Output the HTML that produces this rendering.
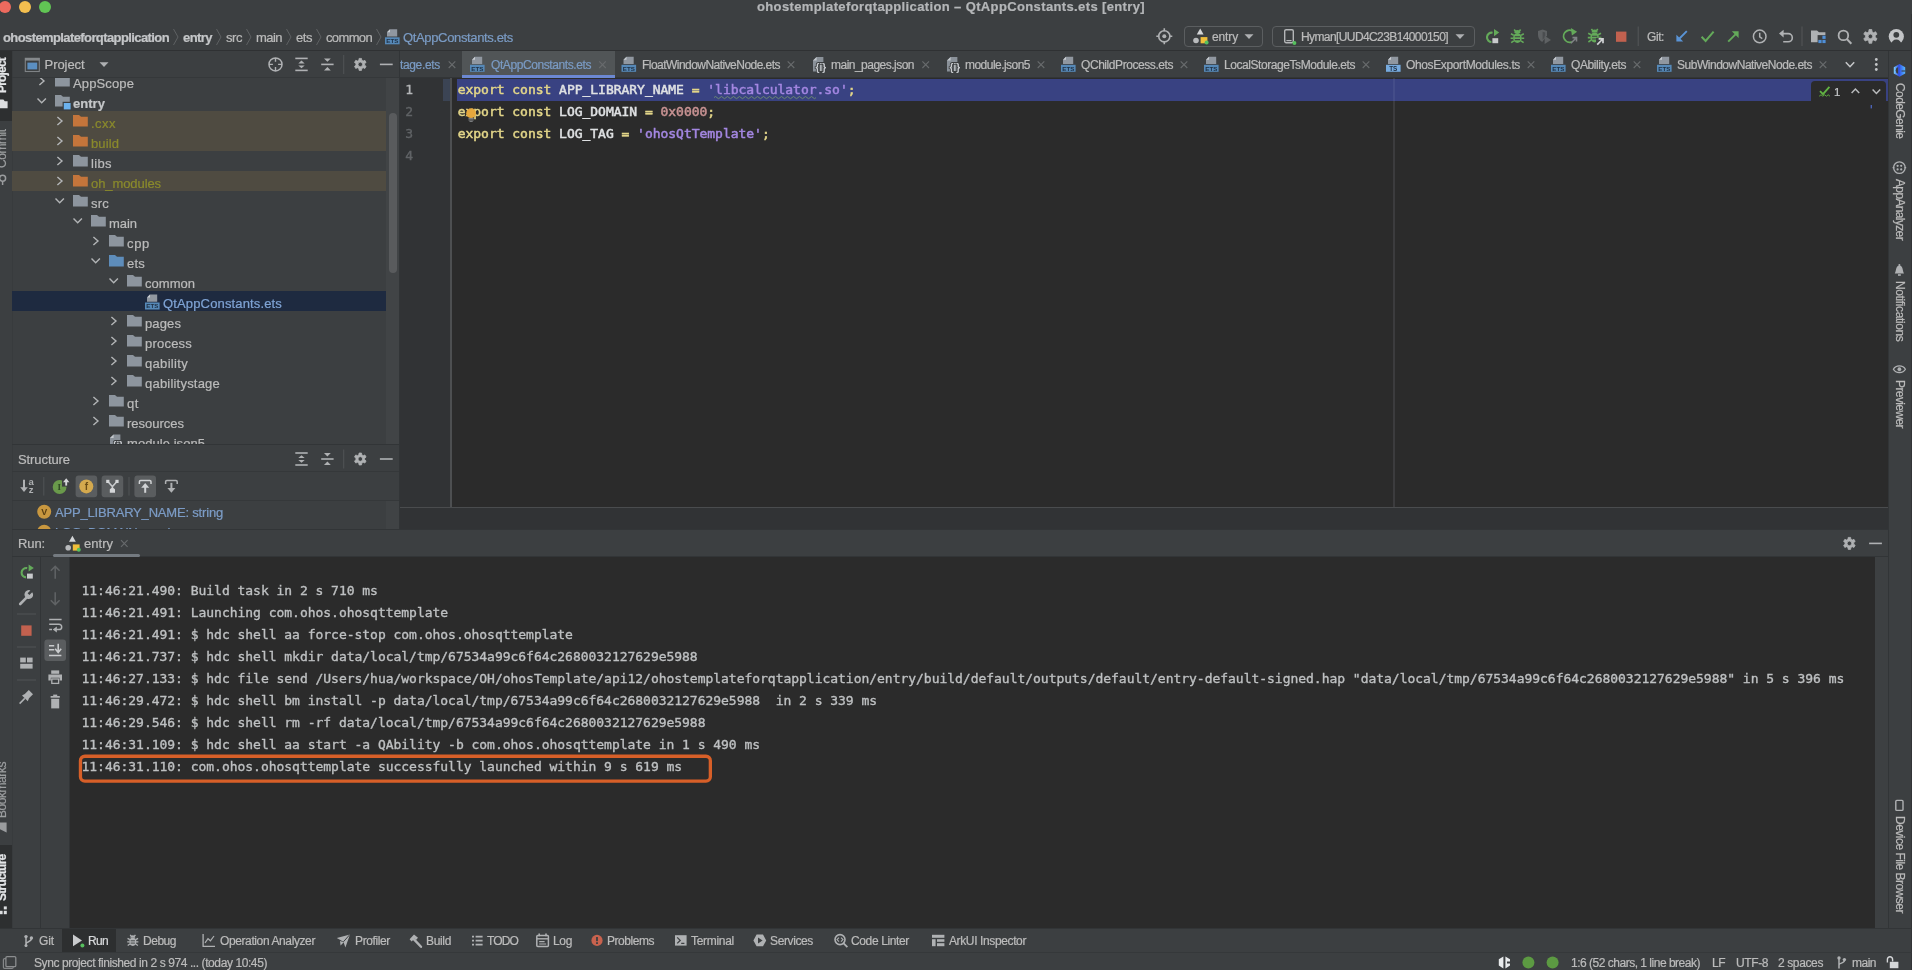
<!DOCTYPE html>
<html lang="en"><head><meta charset="utf-8"><title>ohostemplateforqtapplication – QtAppConstants.ets [entry]</title>
<style>
html,body{margin:0;padding:0;background:#3c3f41;}
body{width:1912px;height:970px;overflow:hidden;position:relative;font-family:"Liberation Sans", sans-serif;font-size:13px;-webkit-font-smoothing:antialiased;}
#r{position:absolute;left:0;top:0;width:1912px;height:970px;overflow:hidden;will-change:transform;}
#r div,#r span,#r svg,#r pre{position:absolute;}
#r span{white-space:pre;-webkit-text-stroke:0.22px;}
#r .m{font-family:"DejaVu Sans Mono", "Liberation Mono", monospace;letter-spacing:-0.027px;-webkit-text-stroke:0.35px;}
#r pre{margin:0;font-family:"DejaVu Sans Mono", "Liberation Mono", monospace;font-size:13px;line-height:22px;white-space:pre;}
#r .c div,#r .c span,#r .c svg{position:absolute;}
</style></head>
<body><div id="r">
<div style="left:0px;top:0px;width:1912px;height:970px;background:#3c3f41;"></div>
<div style="left:0px;top:50px;width:1912px;height:1px;background:#2f3133;"></div>
<div style="left:0px;top:51px;width:12px;height:878px;background:#3c3f41;"></div>
<div style="left:11.5px;top:51px;width:1px;height:878px;background:#383b3d;"></div>
<div style="left:0px;top:51px;width:12px;height:70px;background:#2d2f30;"></div>
<div style="left:0px;top:845px;width:12px;height:84px;background:#2d2f30;"></div>
<div style="left:12px;top:77px;width:388px;height:1px;background:#35383a;"></div>
<div style="left:12px;top:111px;width:374px;height:40px;background:#4f4b41;"></div>
<div style="left:12px;top:171px;width:374px;height:20px;background:#4f4b41;"></div>
<div style="left:12px;top:291px;width:374px;height:20px;background:#1e2a40;"></div>
<div style="left:386px;top:78px;width:13px;height:366px;background:#414446;"></div>
<div style="left:389px;top:113px;width:8px;height:160px;background:#595b5d;border-radius:4px;"></div>
<div style="left:12px;top:444px;width:388px;height:1px;background:#323537;"></div>
<div style="left:12px;top:471px;width:388px;height:1px;background:#35383a;"></div>
<div style="left:12px;top:500px;width:388px;height:1px;background:#35383a;"></div>
<div style="left:386px;top:501px;width:13px;height:28px;background:#404345;"></div>
<div style="left:399px;top:51px;width:1px;height:479px;background:#323537;"></div>
<div style="left:400px;top:78px;width:1488px;height:430px;background:#2b2b2b;"></div>
<div style="left:400px;top:78px;width:51px;height:430px;background:#313335;"></div>
<div style="left:450.4px;top:78px;width:1.8px;height:430px;background:#4d4f51;"></div>
<div style="left:1393px;top:78px;width:1.5px;height:430px;background:#3c3c3e;"></div>
<div style="left:457px;top:78.5px;width:1431px;height:22px;background:#394282;"></div>
<div style="left:1393px;top:78.5px;width:1.5px;height:22px;background:rgba(255,255,255,0.06);"></div>
<div style="left:442.6px;top:78.5px;width:7.8px;height:22px;background:#3b4454;"></div>
<div style="left:400px;top:507px;width:1488px;height:1px;background:#4a4c4e;"></div>
<div style="left:400px;top:508px;width:1488px;height:22px;background:#313335;"></div>
<div style="left:400px;top:77px;width:1488px;height:1px;background:#323537;"></div>
<div style="left:462px;top:51px;width:152.5px;height:26px;background:#515557;"></div>
<div style="left:462px;top:75.2px;width:152.5px;height:2.9px;background:#6c88d2;"></div>
<div style="left:12px;top:529px;width:1876px;height:1px;background:#323537;"></div>
<div style="left:12px;top:556px;width:1876px;height:1px;background:#323537;"></div>
<div style="left:70px;top:557px;width:1805px;height:372px;background:#2b2b2b;"></div>
<div style="left:1874.5px;top:557px;width:14px;height:372px;background:#3d4042;"></div>
<div style="left:40px;top:557px;width:1px;height:372px;background:#323537;"></div>
<div style="left:69px;top:557px;width:1px;height:372px;background:#323537;"></div>
<div style="left:53px;top:554px;width:87px;height:3px;background:#747a80;border-radius:1.5px;"></div>
<div style="left:1888px;top:51px;width:1px;height:878px;background:#323537;"></div>
<div style="left:1910.5px;top:14px;width:1.5px;height:956px;background:#323436;"></div>
<div style="left:0px;top:928px;width:1912px;height:1px;background:#323537;"></div>
<div style="left:62px;top:929px;width:54px;height:23px;background:#2d2f30;"></div>
<div style="left:0px;top:952px;width:1912px;height:1px;background:#35383a;"></div>
<div style="left:-1px;top:1px;width:12px;height:12px;background:#ec6a5e;border-radius:6px;"></div>
<div style="left:19px;top:1px;width:12px;height:12px;background:#f4bf4f;border-radius:6px;"></div>
<div style="left:39px;top:1px;width:12px;height:12px;background:#61c554;border-radius:6px;"></div>
<span style="left:757px;top:-1.0px;color:#b4b6b8;font-size:13px;line-height:16px;font-weight:700;letter-spacing:0.370px;">ohostemplateforqtapplication – QtAppConstants.ets [entry]</span>
<span style="left:3px;top:30.0px;color:#c4c6c8;font-size:13px;line-height:16px;font-weight:700;letter-spacing:-0.598px;">ohostemplateforqtapplication</span>
<span style="left:183px;top:30.0px;color:#c4c6c8;font-size:13px;line-height:16px;font-weight:700;letter-spacing:-0.559px;">entry</span>
<span style="left:226px;top:30.0px;color:#bbbbbb;font-size:13px;line-height:16px;letter-spacing:-0.448px;">src</span>
<span style="left:256px;top:30.0px;color:#bbbbbb;font-size:13px;line-height:16px;letter-spacing:-0.547px;">main</span>
<span style="left:296px;top:30.0px;color:#bbbbbb;font-size:13px;line-height:16px;letter-spacing:-0.448px;">ets</span>
<span style="left:326px;top:30.0px;color:#bbbbbb;font-size:13px;line-height:16px;letter-spacing:-0.643px;">common</span>
<span style="left:403px;top:30.0px;color:#7a9bc4;font-size:13px;line-height:16px;letter-spacing:-0.352px;">QtAppConstants.ets</span>
<svg style="left:172px;top:28px;" width="8" height="18" viewBox="0 0 8 18"><path d="M1.5 1 L6 9 L1.5 17" fill="none" stroke="#5e6163" stroke-width="1"/></svg>
<svg style="left:215px;top:28px;" width="8" height="18" viewBox="0 0 8 18"><path d="M1.5 1 L6 9 L1.5 17" fill="none" stroke="#5e6163" stroke-width="1"/></svg>
<svg style="left:245px;top:28px;" width="8" height="18" viewBox="0 0 8 18"><path d="M1.5 1 L6 9 L1.5 17" fill="none" stroke="#5e6163" stroke-width="1"/></svg>
<svg style="left:285px;top:28px;" width="8" height="18" viewBox="0 0 8 18"><path d="M1.5 1 L6 9 L1.5 17" fill="none" stroke="#5e6163" stroke-width="1"/></svg>
<svg style="left:315px;top:28px;" width="8" height="18" viewBox="0 0 8 18"><path d="M1.5 1 L6 9 L1.5 17" fill="none" stroke="#5e6163" stroke-width="1"/></svg>
<svg style="left:375px;top:28px;" width="8" height="18" viewBox="0 0 8 18"><path d="M1.5 1 L6 9 L1.5 17" fill="none" stroke="#5e6163" stroke-width="1"/></svg>
<div style="left:1183.5px;top:25.7px;width:79.5px;height:21.5px;border:1px solid #5b5e60;border-radius:4px;box-sizing:border-box;"></div>
<div style="left:1272.3px;top:25.7px;width:202.4px;height:21.5px;border:1px solid #5b5e60;border-radius:4px;box-sizing:border-box;"></div>
<span style="left:1212px;top:29.0px;color:#bbbbbb;font-size:12px;line-height:16px;letter-spacing:-0.138px;">entry</span>
<span style="left:1301px;top:29.0px;color:#bbbbbb;font-size:12px;line-height:16px;letter-spacing:-0.599px;">Hyman[UUD4C23B14000150]</span>
<span style="left:1647px;top:29.0px;color:#bbbbbb;font-size:12px;line-height:16px;letter-spacing:-0.418px;">Git:</span>
<span style="left:44.6px;top:57.0px;color:#bbbbbb;font-size:13px;line-height:16px;letter-spacing:-0.067px;">Project</span>
<span style="left:18px;top:451.5px;color:#bbbbbb;font-size:13px;line-height:16px;letter-spacing:-0.083px;">Structure</span>
<span style="left:18px;top:536.4px;color:#bbbbbb;font-size:13px;line-height:16px;letter-spacing:-0.117px;">Run:</span>
<span style="left:84px;top:536.4px;color:#bbbbbb;font-size:13px;line-height:16px;letter-spacing:0.019px;">entry</span>
<span style="left:399.9px;top:57.0px;color:#7a9bc4;font-size:12px;line-height:16px;letter-spacing:-0.325px;">tage.ets</span>
<span style="left:491px;top:57.0px;color:#7a9bc4;font-size:12px;line-height:16px;letter-spacing:-0.411px;">QtAppConstants.ets</span>
<span style="left:642px;top:57.0px;color:#bbbbbb;font-size:12px;line-height:16px;letter-spacing:-0.536px;">FloatWindowNativeNode.ets</span>
<span style="left:831px;top:57.0px;color:#bbbbbb;font-size:12px;line-height:16px;letter-spacing:-0.516px;">main_pages.json</span>
<span style="left:965px;top:57.0px;color:#bbbbbb;font-size:12px;line-height:16px;letter-spacing:-0.533px;">module.json5</span>
<span style="left:1081px;top:57.0px;color:#bbbbbb;font-size:12px;line-height:16px;letter-spacing:-0.434px;">QChildProcess.ets</span>
<span style="left:1224px;top:57.0px;color:#bbbbbb;font-size:12px;line-height:16px;letter-spacing:-0.434px;">LocalStorageTsModule.ets</span>
<span style="left:1406px;top:57.0px;color:#bbbbbb;font-size:12px;line-height:16px;letter-spacing:-0.370px;">OhosExportModules.ts</span>
<span style="left:1571px;top:57.0px;color:#bbbbbb;font-size:12px;line-height:16px;letter-spacing:-0.400px;">QAbility.ets</span>
<span style="left:1677px;top:57.0px;color:#bbbbbb;font-size:12px;line-height:16px;letter-spacing:-0.482px;">SubWindowNativeNode.ets</span>
<div class="c" style="left:12px;top:78px;width:374px;height:366px;overflow:hidden;">
<span style="left:61px;top:-2.5px;color:#bbbbbb;font-size:13px;line-height:16px;letter-spacing:0.125px;">AppScope</span>
<span style="left:61px;top:17.5px;color:#c4c6c8;font-size:13px;line-height:16px;font-weight:700;letter-spacing:0.041px;">entry</span>
<span style="left:79px;top:37.5px;color:#8a8a2c;font-size:13px;line-height:16px;letter-spacing:0.469px;">.cxx</span>
<span style="left:79px;top:57.5px;color:#8a8a2c;font-size:13px;line-height:16px;letter-spacing:0.106px;">build</span>
<span style="left:79px;top:77.5px;color:#bbbbbb;font-size:13px;line-height:16px;letter-spacing:0.371px;">libs</span>
<span style="left:79px;top:97.5px;color:#8a8a2c;font-size:13px;line-height:16px;letter-spacing:-0.083px;">oh_modules</span>
<span style="left:79px;top:117.5px;color:#bbbbbb;font-size:13px;line-height:16px;letter-spacing:0.219px;">src</span>
<span style="left:97px;top:137.5px;color:#bbbbbb;font-size:13px;line-height:16px;letter-spacing:-0.047px;">main</span>
<span style="left:115px;top:157.5px;color:#bbbbbb;font-size:13px;line-height:16px;letter-spacing:0.677px;">cpp</span>
<span style="left:115px;top:177.5px;color:#bbbbbb;font-size:13px;line-height:16px;letter-spacing:0.219px;">ets</span>
<span style="left:133px;top:197.5px;color:#bbbbbb;font-size:13px;line-height:16px;letter-spacing:0.023px;">common</span>
<span style="left:151px;top:217.5px;color:#7fa3d4;font-size:13px;line-height:16px;letter-spacing:0.148px;">QtAppConstants.ets</span>
<span style="left:133px;top:237.5px;color:#bbbbbb;font-size:13px;line-height:16px;letter-spacing:0.116px;">pages</span>
<span style="left:133px;top:257.5px;color:#bbbbbb;font-size:13px;line-height:16px;letter-spacing:0.210px;">process</span>
<span style="left:133px;top:277.5px;color:#bbbbbb;font-size:13px;line-height:16px;letter-spacing:0.316px;">qability</span>
<span style="left:133px;top:297.5px;color:#bbbbbb;font-size:13px;line-height:16px;letter-spacing:0.209px;">qabilitystage</span>
<span style="left:115px;top:317.5px;color:#bbbbbb;font-size:13px;line-height:16px;letter-spacing:0.578px;">qt</span>
<span style="left:115px;top:337.5px;color:#bbbbbb;font-size:13px;line-height:16px;letter-spacing:-0.009px;">resources</span>
<span style="left:115px;top:357.5px;color:#bbbbbb;font-size:13px;line-height:16px;letter-spacing:0.056px;">module.json5</span>
</div>
<div class="c" style="left:12px;top:501px;width:374px;height:28px;overflow:hidden;">
<span style="left:43px;top:4.2999999999999545px;color:#7c9cc6;font-size:13px;line-height:16px;letter-spacing:-0.186px;">APP_LIBRARY_NAME: string</span>
<span style="left:43px;top:24.299999999999955px;color:#7c9cc6;font-size:13px;line-height:16px;letter-spacing:-0.444px;">LOG_DOMAIN: number</span>
</div>
<span class="m" style="left:457.7px;top:78.5px;color:#e3d689;font-size:13px;line-height:22px;-webkit-text-stroke:0.5px;">export const </span>
<span class="m" style="left:559.1px;top:78.5px;color:#dfe1e3;font-size:13px;line-height:22px;-webkit-text-stroke:0.5px;">APP_LIBRARY_NAME </span>
<span class="m" style="left:691.7px;top:78.5px;color:#e3d689;font-size:13px;line-height:22px;-webkit-text-stroke:0.5px;">= </span>
<span class="m" style="left:707.3px;top:78.5px;color:#a487e2;font-size:13px;line-height:22px;-webkit-text-stroke:0.5px;">'libcalculator.so'</span>
<span class="m" style="left:847.7px;top:78.5px;color:#e3d689;font-size:13px;line-height:22px;-webkit-text-stroke:0.5px;">;</span>
<span class="m" style="left:457.7px;top:100.5px;color:#e3d689;font-size:13px;line-height:22px;-webkit-text-stroke:0.5px;">export const </span>
<span class="m" style="left:559.1px;top:100.5px;color:#dfe1e3;font-size:13px;line-height:22px;-webkit-text-stroke:0.5px;">LOG_DOMAIN </span>
<span class="m" style="left:644.9px;top:100.5px;color:#e3d689;font-size:13px;line-height:22px;-webkit-text-stroke:0.5px;">= </span>
<span class="m" style="left:660.5px;top:100.5px;color:#c99393;font-size:13px;line-height:22px;-webkit-text-stroke:0.5px;">0x0000</span>
<span class="m" style="left:707.3px;top:100.5px;color:#e3d689;font-size:13px;line-height:22px;-webkit-text-stroke:0.5px;">;</span>
<span class="m" style="left:457.7px;top:122.5px;color:#e3d689;font-size:13px;line-height:22px;-webkit-text-stroke:0.5px;">export const </span>
<span class="m" style="left:559.1px;top:122.5px;color:#dfe1e3;font-size:13px;line-height:22px;-webkit-text-stroke:0.5px;">LOG_TAG </span>
<span class="m" style="left:621.5px;top:122.5px;color:#e3d689;font-size:13px;line-height:22px;-webkit-text-stroke:0.5px;">= </span>
<span class="m" style="left:637.1px;top:122.5px;color:#a487e2;font-size:13px;line-height:22px;-webkit-text-stroke:0.5px;">'ohosQtTemplate'</span>
<span class="m" style="left:761.9px;top:122.5px;color:#e3d689;font-size:13px;line-height:22px;-webkit-text-stroke:0.5px;">;</span>
<span class="m" style="left:405.2px;top:79.1px;color:#b4b6b8;font-size:13px;line-height:22px;">1</span>
<span class="m" style="left:405.2px;top:101.1px;color:#606366;font-size:13px;line-height:22px;">2</span>
<span class="m" style="left:405.2px;top:123.1px;color:#606366;font-size:13px;line-height:22px;">3</span>
<span class="m" style="left:405.2px;top:145.1px;color:#606366;font-size:13px;line-height:22px;">4</span>
<div style="left:1810.7px;top:80.7px;width:75.5px;height:21px;background:#2b2b2b;border-radius:4px 4px 0 0;"></div>
<span style="left:1834px;top:84.0px;color:#c4c6c8;font-size:11.5px;line-height:16px;">1</span>
<span class="m" style="left:81.5px;top:580.0px;color:#bec0c2;font-size:13px;line-height:22px;">11:46:21.490: Build task in 2 s 710 ms</span>
<span class="m" style="left:81.5px;top:602.0px;color:#bec0c2;font-size:13px;line-height:22px;">11:46:21.491: Launching com.ohos.ohosqttemplate</span>
<span class="m" style="left:81.5px;top:624.0px;color:#bec0c2;font-size:13px;line-height:22px;">11:46:21.491: $ hdc shell aa force-stop com.ohos.ohosqttemplate</span>
<span class="m" style="left:81.5px;top:646.0px;color:#bec0c2;font-size:13px;line-height:22px;">11:46:21.737: $ hdc shell mkdir data/local/tmp/67534a99c6f64c2680032127629e5988</span>
<span class="m" style="left:81.5px;top:668.0px;color:#bec0c2;font-size:13px;line-height:22px;">11:46:27.133: $ hdc file send /Users/hua/workspace/OH/ohosTemplate/api12/ohostemplateforqtapplication/entry/build/default/outputs/default/entry-default-signed.hap "data/local/tmp/67534a99c6f64c2680032127629e5988" in 5 s 396 ms</span>
<span class="m" style="left:81.5px;top:690.0px;color:#bec0c2;font-size:13px;line-height:22px;">11:46:29.472: $ hdc shell bm install -p data/local/tmp/67534a99c6f64c2680032127629e5988  in 2 s 339 ms</span>
<span class="m" style="left:81.5px;top:712.0px;color:#bec0c2;font-size:13px;line-height:22px;">11:46:29.546: $ hdc shell rm -rf data/local/tmp/67534a99c6f64c2680032127629e5988</span>
<span class="m" style="left:81.5px;top:734.0px;color:#bec0c2;font-size:13px;line-height:22px;">11:46:31.109: $ hdc shell aa start -a QAbility -b com.ohos.ohosqttemplate in 1 s 490 ms</span>
<span class="m" style="left:81.5px;top:756.0px;color:#bec0c2;font-size:13px;line-height:22px;">11:46:31.110: com.ohos.ohosqttemplate successfully launched within 9 s 619 ms</span>
<span style="left:39px;top:932.8px;color:#bbbbbb;font-size:12px;line-height:16px;letter-spacing:-0.115px;">Git</span>
<span style="left:88px;top:932.8px;color:#d6d8da;font-size:12px;line-height:16px;letter-spacing:-0.672px;">Run</span>
<span style="left:143px;top:932.8px;color:#bbbbbb;font-size:12px;line-height:16px;letter-spacing:-0.475px;">Debug</span>
<span style="left:220px;top:932.8px;color:#bbbbbb;font-size:12px;line-height:16px;letter-spacing:-0.392px;">Operation Analyzer</span>
<span style="left:355px;top:932.8px;color:#bbbbbb;font-size:12px;line-height:16px;letter-spacing:-0.377px;">Profiler</span>
<span style="left:426px;top:932.8px;color:#bbbbbb;font-size:12px;line-height:16px;letter-spacing:-0.338px;">Build</span>
<span style="left:487px;top:932.8px;color:#bbbbbb;font-size:12px;line-height:16px;letter-spacing:-0.863px;">TODO</span>
<span style="left:553px;top:932.8px;color:#bbbbbb;font-size:12px;line-height:16px;letter-spacing:-0.344px;">Log</span>
<span style="left:607px;top:932.8px;color:#bbbbbb;font-size:12px;line-height:16px;letter-spacing:-0.461px;">Problems</span>
<span style="left:691px;top:932.8px;color:#bbbbbb;font-size:12px;line-height:16px;letter-spacing:-0.295px;">Terminal</span>
<span style="left:770px;top:932.8px;color:#bbbbbb;font-size:12px;line-height:16px;letter-spacing:-0.377px;">Services</span>
<span style="left:851px;top:932.8px;color:#bbbbbb;font-size:12px;line-height:16px;letter-spacing:-0.368px;">Code Linter</span>
<span style="left:949px;top:932.8px;color:#bbbbbb;font-size:12px;line-height:16px;letter-spacing:-0.380px;">ArkUI Inspector</span>
<span style="left:34px;top:954.8px;color:#bbbbbb;font-size:12px;line-height:16px;letter-spacing:-0.410px;">Sync project finished in 2 s 974 ... (today 10:45)</span>
<span style="left:1571px;top:954.8px;color:#bbbbbb;font-size:12px;line-height:16px;letter-spacing:-0.491px;">1:6 (52 chars, 1 line break)</span>
<span style="left:1712px;top:954.8px;color:#bbbbbb;font-size:12px;line-height:16px;letter-spacing:-0.508px;">LF</span>
<span style="left:1736px;top:954.8px;color:#bbbbbb;font-size:12px;line-height:16px;letter-spacing:-0.400px;">UTF-8</span>
<span style="left:1778px;top:954.8px;color:#bbbbbb;font-size:12px;line-height:16px;letter-spacing:-0.379px;">2 spaces</span>
<span style="left:1852px;top:954.8px;color:#bbbbbb;font-size:12px;line-height:16px;letter-spacing:-0.504px;">main</span>
<svg style="left:12px;top:78px;" width="374" height="366" viewBox="0 0 374 366"><g transform="translate(29.7 3)"><path d="M-2.3 -4.1 L2.3 0 L-2.3 4.1" fill="none" stroke="#b2b4b6" stroke-width="1.4"/></g><g transform="translate(43 -7)"><path d="M0 4 h6 l2 1.8 h6.8 v9.8 h-14.8 z" fill="#8d959e"/></g><g transform="translate(29.7 22.6)"><path d="M-4.2 -2.2 L0 2.2 L4.2 -2.2" fill="none" stroke="#b2b4b6" stroke-width="1.4"/></g><g transform="translate(43 13)"><path d="M0 4 h6 l2 1.8 h6.8 v9.8 h-14.8 z" fill="#8d959e"/></g><g transform="translate(43 13)"><rect x="7.6" y="10.8" width="8.4" height="8.4" fill="#3c3f41"/><rect x="8.8" y="12" width="6.8" height="6.4" fill="#6cb2ee"/></g><g transform="translate(47.7 43)"><path d="M-2.3 -4.1 L2.3 0 L-2.3 4.1" fill="none" stroke="#b2b4b6" stroke-width="1.4"/></g><g transform="translate(61 33)"><path d="M0 4 h6 l2 1.8 h6.8 v9.8 h-14.8 z" fill="#c4753b"/></g><g transform="translate(47.7 63)"><path d="M-2.3 -4.1 L2.3 0 L-2.3 4.1" fill="none" stroke="#b2b4b6" stroke-width="1.4"/></g><g transform="translate(61 53)"><path d="M0 4 h6 l2 1.8 h6.8 v9.8 h-14.8 z" fill="#c4753b"/></g><g transform="translate(47.7 83)"><path d="M-2.3 -4.1 L2.3 0 L-2.3 4.1" fill="none" stroke="#b2b4b6" stroke-width="1.4"/></g><g transform="translate(61 73)"><path d="M0 4 h6 l2 1.8 h6.8 v9.8 h-14.8 z" fill="#8d959e"/></g><g transform="translate(47.7 103)"><path d="M-2.3 -4.1 L2.3 0 L-2.3 4.1" fill="none" stroke="#b2b4b6" stroke-width="1.4"/></g><g transform="translate(61 93)"><path d="M0 4 h6 l2 1.8 h6.8 v9.8 h-14.8 z" fill="#c4753b"/></g><g transform="translate(47.7 122.6)"><path d="M-4.2 -2.2 L0 2.2 L4.2 -2.2" fill="none" stroke="#b2b4b6" stroke-width="1.4"/></g><g transform="translate(61 113)"><path d="M0 4 h6 l2 1.8 h6.8 v9.8 h-14.8 z" fill="#8d959e"/></g><g transform="translate(65.7 142.6)"><path d="M-4.2 -2.2 L0 2.2 L4.2 -2.2" fill="none" stroke="#b2b4b6" stroke-width="1.4"/></g><g transform="translate(79 133)"><path d="M0 4 h6 l2 1.8 h6.8 v9.8 h-14.8 z" fill="#8d959e"/></g><g transform="translate(83.7 163)"><path d="M-2.3 -4.1 L2.3 0 L-2.3 4.1" fill="none" stroke="#b2b4b6" stroke-width="1.4"/></g><g transform="translate(97 153)"><path d="M0 4 h6 l2 1.8 h6.8 v9.8 h-14.8 z" fill="#8d959e"/></g><g transform="translate(83.7 182.6)"><path d="M-4.2 -2.2 L0 2.2 L4.2 -2.2" fill="none" stroke="#b2b4b6" stroke-width="1.4"/></g><g transform="translate(97 173)"><path d="M0 4 h6 l2 1.8 h6.8 v9.8 h-14.8 z" fill="#5e8dbb"/></g><g transform="translate(101.7 202.6)"><path d="M-4.2 -2.2 L0 2.2 L4.2 -2.2" fill="none" stroke="#b2b4b6" stroke-width="1.4"/></g><g transform="translate(115 193)"><path d="M0 4 h6 l2 1.8 h6.8 v9.8 h-14.8 z" fill="#8d959e"/></g><g transform="translate(133 216.2)"><path d="M5 0.3 h7.2 v7.2 h-10.2 v-4.2 z" fill="#9097a0"/><path d="M2 3.3 l3 -3 v3 z" fill="#c9cdd2"/><rect x="0" y="8.3" width="14.6" height="7" fill="#5689b8"/><text x="7.3" y="14.1" font-size="6.2" font-weight="700" text-anchor="middle" fill="#203246" font-family="Liberation Sans, sans-serif">ETS</text></g><g transform="translate(101.7 243)"><path d="M-2.3 -4.1 L2.3 0 L-2.3 4.1" fill="none" stroke="#b2b4b6" stroke-width="1.4"/></g><g transform="translate(115 233)"><path d="M0 4 h6 l2 1.8 h6.8 v9.8 h-14.8 z" fill="#8d959e"/></g><g transform="translate(101.7 263)"><path d="M-2.3 -4.1 L2.3 0 L-2.3 4.1" fill="none" stroke="#b2b4b6" stroke-width="1.4"/></g><g transform="translate(115 253)"><path d="M0 4 h6 l2 1.8 h6.8 v9.8 h-14.8 z" fill="#8d959e"/></g><g transform="translate(101.7 283)"><path d="M-2.3 -4.1 L2.3 0 L-2.3 4.1" fill="none" stroke="#b2b4b6" stroke-width="1.4"/></g><g transform="translate(115 273)"><path d="M0 4 h6 l2 1.8 h6.8 v9.8 h-14.8 z" fill="#8d959e"/></g><g transform="translate(101.7 303)"><path d="M-2.3 -4.1 L2.3 0 L-2.3 4.1" fill="none" stroke="#b2b4b6" stroke-width="1.4"/></g><g transform="translate(115 293)"><path d="M0 4 h6 l2 1.8 h6.8 v9.8 h-14.8 z" fill="#8d959e"/></g><g transform="translate(83.7 323)"><path d="M-2.3 -4.1 L2.3 0 L-2.3 4.1" fill="none" stroke="#b2b4b6" stroke-width="1.4"/></g><g transform="translate(97 313)"><path d="M0 4 h6 l2 1.8 h6.8 v9.8 h-14.8 z" fill="#8d959e"/></g><g transform="translate(83.7 343)"><path d="M-2.3 -4.1 L2.3 0 L-2.3 4.1" fill="none" stroke="#b2b4b6" stroke-width="1.4"/></g><g transform="translate(97 333)"><path d="M0 4 h6 l2 1.8 h6.8 v9.8 h-14.8 z" fill="#8d959e"/></g><g transform="translate(98 356.5)"><path d="M3.6 0 h6.8 v14.4 h-10.4 v-10.8 z" fill="#8a9199"/><path d="M0 3.6 l3.6 -3.6 v3.6 z" fill="#c3c8cd"/><text x="7.8" y="14" font-size="10" font-weight="700" text-anchor="middle" fill="#c9ccd0" stroke="#3c3f41" stroke-width="1.8" paint-order="stroke" font-family="Liberation Sans, sans-serif">{i}</text></g></svg>
<span style="left:-6.4px;top:92.5px;color:#e4e6e8;font-size:12px;line-height:16px;font-weight:700;letter-spacing:-0.812px;transform-origin:0 0;transform:rotate(-90deg);">Project</span>
<span style="left:-6.4px;top:168.0px;color:#9c9ea0;font-size:12px;line-height:16px;letter-spacing:-0.474px;transform-origin:0 0;transform:rotate(-90deg);">Commit</span>
<span style="left:-6.2px;top:817.5px;color:#9c9ea0;font-size:12px;line-height:16px;letter-spacing:-0.448px;transform-origin:0 0;transform:rotate(-90deg);">Bookmarks</span>
<span style="left:-6.2px;top:901.0px;color:#e4e6e8;font-size:12px;line-height:16px;font-weight:700;letter-spacing:-0.760px;transform-origin:0 0;transform:rotate(-90deg);">Structure</span>
<span style="left:1908.2px;top:82.6px;color:#bbbbbb;font-size:12px;line-height:16px;letter-spacing:-0.591px;transform-origin:0 0;transform:rotate(90deg);">CodeGenie</span>
<span style="left:1908.2px;top:178.6px;color:#bbbbbb;font-size:12px;line-height:16px;letter-spacing:-0.641px;transform-origin:0 0;transform:rotate(90deg);">AppAnalyzer</span>
<span style="left:1908.2px;top:280.6px;color:#bbbbbb;font-size:12px;line-height:16px;letter-spacing:-0.383px;transform-origin:0 0;transform:rotate(90deg);">Notifications</span>
<span style="left:1908.2px;top:379.6px;color:#bbbbbb;font-size:12px;line-height:16px;letter-spacing:-0.595px;transform-origin:0 0;transform:rotate(90deg);">Previewer</span>
<span style="left:1908.2px;top:816.0px;color:#bbbbbb;font-size:12px;line-height:16px;letter-spacing:-0.511px;transform-origin:0 0;transform:rotate(90deg);">Device File Browser</span>
<svg style="left:0px;top:0px;pointer-events:none;" width="1912" height="970" viewBox="0 0 1912 970"><g transform="translate(25 58)"><rect x="0.3" y="0.3" width="14" height="13.2" fill="none" stroke="#7f8386" stroke-width="1.1"/><rect x="0" y="0" width="14.6" height="2.6" fill="#85898c"/><rect x="2.4" y="4.6" width="9.8" height="6.8" fill="#5b8fc2"/></g><path d="M99.5 62.3 h9 l-4.5 4.6 z" fill="#aeb0b2"/><g transform="translate(275.5 64.4)"><circle r="6.5" fill="none" stroke="#afb1b3" stroke-width="1.5"/><path d="M0 -6.5 V-2.6 M0 6.5 V2.6 M-6.5 0 H-2.6 M6.5 0 H2.6" stroke="#afb1b3" stroke-width="1.4"/></g><g transform="translate(301.5 64.4)"><rect x="-6.2" y="-6.8" width="12.4" height="1.6" fill="#afb1b3"/><rect x="-6.2" y="5.2" width="12.4" height="1.6" fill="#afb1b3"/><path d="M-3.2 -1 L0 -3.8 L3.2 -1 Z M-3.2 1 L0 3.8 L3.2 1 Z" fill="#afb1b3"/></g><g transform="translate(327.4 64.4)"><rect x="-6.2" y="-0.8" width="12.4" height="1.6" fill="#afb1b3"/><path d="M-3.4 -6 L0 -2.6 L3.4 -6 Z M-3.4 6 L0 2.6 L3.4 6 Z" fill="#afb1b3"/></g><rect x="343.2" y="55" width="1" height="19" fill="#515456"/><g transform="translate(360.3 64.4)"><path d="M-1.47 -4.15 L-1.21 -5.98 L1.21 -5.98 L1.47 -4.15 L2.86 -3.34 L4.57 -4.04 L5.78 -1.94 L4.33 -0.80 L4.33 0.80 L5.78 1.94 L4.57 4.04 L2.86 3.34 L1.47 4.15 L1.21 5.98 L-1.21 5.98 L-1.47 4.15 L-2.86 3.34 L-4.57 4.04 L-5.78 1.94 L-4.33 0.80 L-4.33 -0.80 L-5.78 -1.94 L-4.57 -4.04 L-2.86 -3.34 Z M2.3 0 A2.3 2.3 0 1 0 -2.3 0 A2.3 2.3 0 1 0 2.3 0 Z" fill="#afb1b3" fill-rule="evenodd" stroke="#afb1b3" stroke-width="0.8" stroke-linejoin="round"/></g><g transform="translate(386.3 64.4)"><rect x="-6.4" y="-0.8" width="12.8" height="1.6" fill="#afb1b3"/></g><g transform="translate(301.5 459)"><rect x="-6.2" y="-6.8" width="12.4" height="1.6" fill="#afb1b3"/><rect x="-6.2" y="5.2" width="12.4" height="1.6" fill="#afb1b3"/><path d="M-3.2 -1 L0 -3.8 L3.2 -1 Z M-3.2 1 L0 3.8 L3.2 1 Z" fill="#afb1b3"/></g><g transform="translate(327.4 459)"><rect x="-6.2" y="-0.8" width="12.4" height="1.6" fill="#afb1b3"/><path d="M-3.4 -6 L0 -2.6 L3.4 -6 Z M-3.4 6 L0 2.6 L3.4 6 Z" fill="#afb1b3"/></g><rect x="343.2" y="449.5" width="1" height="19.0" fill="#515456"/><g transform="translate(360.3 459)"><path d="M-1.47 -4.15 L-1.21 -5.98 L1.21 -5.98 L1.47 -4.15 L2.86 -3.34 L4.57 -4.04 L5.78 -1.94 L4.33 -0.80 L4.33 0.80 L5.78 1.94 L4.57 4.04 L2.86 3.34 L1.47 4.15 L1.21 5.98 L-1.21 5.98 L-1.47 4.15 L-2.86 3.34 L-4.57 4.04 L-5.78 1.94 L-4.33 0.80 L-4.33 -0.80 L-5.78 -1.94 L-4.57 -4.04 L-2.86 -3.34 Z M2.3 0 A2.3 2.3 0 1 0 -2.3 0 A2.3 2.3 0 1 0 2.3 0 Z" fill="#afb1b3" fill-rule="evenodd" stroke="#afb1b3" stroke-width="0.8" stroke-linejoin="round"/></g><g transform="translate(386.3 459)"><rect x="-6.4" y="-0.8" width="12.8" height="1.6" fill="#afb1b3"/></g><g transform="translate(1849.4 543.4)"><path d="M-1.47 -4.15 L-1.21 -5.98 L1.21 -5.98 L1.47 -4.15 L2.86 -3.34 L4.57 -4.04 L5.78 -1.94 L4.33 -0.80 L4.33 0.80 L5.78 1.94 L4.57 4.04 L2.86 3.34 L1.47 4.15 L1.21 5.98 L-1.21 5.98 L-1.47 4.15 L-2.86 3.34 L-4.57 4.04 L-5.78 1.94 L-4.33 0.80 L-4.33 -0.80 L-5.78 -1.94 L-4.57 -4.04 L-2.86 -3.34 Z M2.3 0 A2.3 2.3 0 1 0 -2.3 0 A2.3 2.3 0 1 0 2.3 0 Z" fill="#afb1b3" fill-rule="evenodd" stroke="#afb1b3" stroke-width="0.8" stroke-linejoin="round"/></g><g transform="translate(1875.5 543.4)"><rect x="-6.4" y="-0.8" width="12.8" height="1.6" fill="#afb1b3"/></g><g transform="translate(385 29)"><path d="M5 0.3 h7.2 v7.2 h-10.2 v-4.2 z" fill="#9097a0"/><path d="M2 3.3 l3 -3 v3 z" fill="#c9cdd2"/><rect x="0" y="8.3" width="14.6" height="7" fill="#5689b8"/><text x="7.3" y="14.1" font-size="6.2" font-weight="700" text-anchor="middle" fill="#203246" font-family="Liberation Sans, sans-serif">ETS</text></g><g transform="translate(470 56.5)"><path d="M5 0.3 h7.2 v7.2 h-10.2 v-4.2 z" fill="#9097a0"/><path d="M2 3.3 l3 -3 v3 z" fill="#c9cdd2"/><rect x="0" y="8.3" width="14.6" height="7" fill="#5689b8"/><text x="7.3" y="14.1" font-size="6.2" font-weight="700" text-anchor="middle" fill="#203246" font-family="Liberation Sans, sans-serif">ETS</text></g><g transform="translate(621.5 56.5)"><path d="M5 0.3 h7.2 v7.2 h-10.2 v-4.2 z" fill="#9097a0"/><path d="M2 3.3 l3 -3 v3 z" fill="#c9cdd2"/><rect x="0" y="8.3" width="14.6" height="7" fill="#5689b8"/><text x="7.3" y="14.1" font-size="6.2" font-weight="700" text-anchor="middle" fill="#203246" font-family="Liberation Sans, sans-serif">ETS</text></g><g transform="translate(813 57)"><path d="M3.6 0 h6.8 v14.4 h-10.4 v-10.8 z" fill="#8a9199"/><path d="M0 3.6 l3.6 -3.6 v3.6 z" fill="#c3c8cd"/><text x="7.8" y="14" font-size="10" font-weight="700" text-anchor="middle" fill="#c9ccd0" stroke="#3c3f41" stroke-width="1.8" paint-order="stroke" font-family="Liberation Sans, sans-serif">{i}</text></g><g transform="translate(947 57)"><path d="M3.6 0 h6.8 v14.4 h-10.4 v-10.8 z" fill="#8a9199"/><path d="M0 3.6 l3.6 -3.6 v3.6 z" fill="#c3c8cd"/><text x="7.8" y="14" font-size="10" font-weight="700" text-anchor="middle" fill="#c9ccd0" stroke="#3c3f41" stroke-width="1.8" paint-order="stroke" font-family="Liberation Sans, sans-serif">{i}</text></g><g transform="translate(1061 56.5)"><path d="M5 0.3 h7.2 v7.2 h-10.2 v-4.2 z" fill="#9097a0"/><path d="M2 3.3 l3 -3 v3 z" fill="#c9cdd2"/><rect x="0" y="8.3" width="14.6" height="7" fill="#5689b8"/><text x="7.3" y="14.1" font-size="6.2" font-weight="700" text-anchor="middle" fill="#203246" font-family="Liberation Sans, sans-serif">ETS</text></g><g transform="translate(1204 56.5)"><path d="M5 0.3 h7.2 v7.2 h-10.2 v-4.2 z" fill="#9097a0"/><path d="M2 3.3 l3 -3 v3 z" fill="#c9cdd2"/><rect x="0" y="8.3" width="14.6" height="7" fill="#5689b8"/><text x="7.3" y="14.1" font-size="6.2" font-weight="700" text-anchor="middle" fill="#203246" font-family="Liberation Sans, sans-serif">ETS</text></g><g transform="translate(1386 56.5)"><path d="M5 0.3 h7.2 v7.2 h-10.2 v-4.2 z" fill="#9097a0"/><path d="M2 3.3 l3 -3 v3 z" fill="#c9cdd2"/><rect x="0" y="8.3" width="14.6" height="7" fill="#76aade"/><text x="7.3" y="14.1" font-size="6.4" font-weight="700" text-anchor="middle" fill="#203246" font-family="Liberation Sans, sans-serif">TS</text></g><g transform="translate(1551 56.5)"><path d="M5 0.3 h7.2 v7.2 h-10.2 v-4.2 z" fill="#9097a0"/><path d="M2 3.3 l3 -3 v3 z" fill="#c9cdd2"/><rect x="0" y="8.3" width="14.6" height="7" fill="#5689b8"/><text x="7.3" y="14.1" font-size="6.2" font-weight="700" text-anchor="middle" fill="#203246" font-family="Liberation Sans, sans-serif">ETS</text></g><g transform="translate(1657 56.5)"><path d="M5 0.3 h7.2 v7.2 h-10.2 v-4.2 z" fill="#9097a0"/><path d="M2 3.3 l3 -3 v3 z" fill="#c9cdd2"/><rect x="0" y="8.3" width="14.6" height="7" fill="#5689b8"/><text x="7.3" y="14.1" font-size="6.2" font-weight="700" text-anchor="middle" fill="#203246" font-family="Liberation Sans, sans-serif">ETS</text></g><g transform="translate(452 64.7)"><path d="M-3.3 -3.3 L3.3 3.3 M3.3 -3.3 L-3.3 3.3" stroke="#686b6d" stroke-width="1.1" fill="none"/></g><g transform="translate(602.5 64.7)"><path d="M-3.3 -3.3 L3.3 3.3 M3.3 -3.3 L-3.3 3.3" stroke="#686b6d" stroke-width="1.1" fill="none"/></g><g transform="translate(791 64.7)"><path d="M-3.3 -3.3 L3.3 3.3 M3.3 -3.3 L-3.3 3.3" stroke="#686b6d" stroke-width="1.1" fill="none"/></g><g transform="translate(925.7 64.7)"><path d="M-3.3 -3.3 L3.3 3.3 M3.3 -3.3 L-3.3 3.3" stroke="#686b6d" stroke-width="1.1" fill="none"/></g><g transform="translate(1041 64.7)"><path d="M-3.3 -3.3 L3.3 3.3 M3.3 -3.3 L-3.3 3.3" stroke="#686b6d" stroke-width="1.1" fill="none"/></g><g transform="translate(1184 64.7)"><path d="M-3.3 -3.3 L3.3 3.3 M3.3 -3.3 L-3.3 3.3" stroke="#686b6d" stroke-width="1.1" fill="none"/></g><g transform="translate(1366 64.7)"><path d="M-3.3 -3.3 L3.3 3.3 M3.3 -3.3 L-3.3 3.3" stroke="#686b6d" stroke-width="1.1" fill="none"/></g><g transform="translate(1531 64.7)"><path d="M-3.3 -3.3 L3.3 3.3 M3.3 -3.3 L-3.3 3.3" stroke="#686b6d" stroke-width="1.1" fill="none"/></g><g transform="translate(1637 64.7)"><path d="M-3.3 -3.3 L3.3 3.3 M3.3 -3.3 L-3.3 3.3" stroke="#686b6d" stroke-width="1.1" fill="none"/></g><g transform="translate(1823 64.7)"><path d="M-3.3 -3.3 L3.3 3.3 M3.3 -3.3 L-3.3 3.3" stroke="#686b6d" stroke-width="1.1" fill="none"/></g><g transform="translate(124.3 543.5)"><path d="M-3.3 -3.3 L3.3 3.3 M3.3 -3.3 L-3.3 3.3" stroke="#686b6d" stroke-width="1.1" fill="none"/></g><g transform="translate(1850 64.5)"><path d="M-4.2 -2.2 L0 2.2 L4.2 -2.2" fill="none" stroke="#c4c6c8" stroke-width="1.6"/></g><g transform="translate(1876.3 64.5)"><circle cy="-5" r="1.4" fill="#c4c6c8"/><circle r="1.4" fill="#c4c6c8"/><circle cy="5" r="1.4" fill="#c4c6c8"/></g><g transform="translate(1164.3 36.3)"><circle r="5.6" fill="none" stroke="#afb1b3" stroke-width="1.6"/><circle r="2" fill="#afb1b3"/><path d="M0 -8 V-5 M0 8 V5 M-8 0 H-5 M8 0 H5" stroke="#afb1b3" stroke-width="1.6"/></g><g transform="translate(1193 28.5)"><path d="M7.2 0 L10.6 6 H3.8 Z" fill="#d4d6d8"/><circle cx="3" cy="12" r="2.8" fill="#b9bbbd"/><rect x="7.6" y="8.6" width="6.8" height="6.2" fill="#f0bf3a"/><circle cx="13.6" cy="14" r="2" fill="#57c05f"/></g><path d="M1244.5 34.2 h9 l-4.5 4.8 z" fill="#aeb0b2"/><g transform="translate(1284 29)"><rect x="0.7" y="0.7" width="8.6" height="13" rx="1.4" fill="none" stroke="#b4b6b8" stroke-width="1.4"/><rect x="2.4" y="11" width="5.2" height="1.2" fill="#b4b6b8"/><circle cx="10.4" cy="14" r="2" fill="#57c05f"/></g><path d="M1455.5 34.2 h9 l-4.5 4.8 z" fill="#aeb0b2"/><g transform="translate(1491.6 37)"><path d="M0.4 5 A4.7 4.7 0 1 1 1 -4.3" fill="none" stroke="#64aa5a" stroke-width="2.1"/><path d="M2.4 -8 L7.6 -4.4 L2.4 -0.8 Z" fill="#64aa5a"/><rect x="-0.2" y="0.2" width="7.8" height="7" fill="#3c3f41"/><rect x="0.8" y="1.2" width="5.8" height="5" fill="#c8cacc"/></g><g transform="translate(1517.4 36.8)"><g transform="scale(1.0)"><ellipse cx="0" cy="1.2" rx="4.3" ry="5" fill="#64aa5a"/><path d="M-3 -3.8 A3 3 0 0 1 3 -3.8 Z" fill="#64aa5a"/><path d="M-3.6 -1.4 L-6.4 -3 M-4 1.4 H-6.8 M-3.6 4 L-6.2 5.8 M3.6 -1.4 L6.4 -3 M4 1.4 H6.8 M3.6 4 L6.2 5.8 M-1.8 -5.4 L-3.2 -7.2 M1.8 -5.4 L3.2 -7.2" stroke="#64aa5a" stroke-width="1.6" fill="none"/><path d="M-2.6 0 H2.6 M-2.6 2.8 H2.6" stroke="#3c3f41" stroke-width="1.1"/></g></g><g transform="translate(1543.6 36.4)"><path d="M-5.6 -5.4 L-1 -7 L3.4 -5.4 V-1 L-1.4 5.6 C-4.4 3.6 -5.6 1 -5.6 -2 Z" fill="#5e6163"/><path d="M-1 -4.6 L1.6 -3.8 V0.6 L-1 3.4 Z" fill="#4a4d4f"/><path d="M1 -0.6 L7.4 3.6 L1 7.6 Z" fill="#5e6163"/></g><g transform="translate(1569.5 36.2)"><path d="M2.4 5.6 A6 6 0 1 1 5 -3.4" fill="none" stroke="#64aa5a" stroke-width="1.8"/><path d="M1.4 -8.2 L7.6 -4.4 L2.4 -0.6 Z" fill="#64aa5a"/><path d="M1.4 7 L6.6 1.8 M3 1.4 H7 V5.4" stroke="#808386" stroke-width="1.6" fill="none"/></g><g transform="translate(1594.6 36.2)"><g transform="scale(1.0)"><ellipse cx="0" cy="1.2" rx="4.3" ry="5" fill="#64aa5a"/><path d="M-3 -3.8 A3 3 0 0 1 3 -3.8 Z" fill="#64aa5a"/><path d="M-3.6 -1.4 L-6.4 -3 M-4 1.4 H-6.8 M-3.6 4 L-6.2 5.8 M3.6 -1.4 L6.4 -3 M4 1.4 H6.8 M3.6 4 L6.2 5.8 M-1.8 -5.4 L-3.2 -7.2 M1.8 -5.4 L3.2 -7.2" stroke="#64aa5a" stroke-width="1.6" fill="none"/><path d="M-2.6 0 H2.6 M-2.6 2.8 H2.6" stroke="#3c3f41" stroke-width="1.1"/></g></g><g transform="translate(1594.6 36.2)"><rect x="1.4" y="1.6" width="8" height="8" fill="#3c3f41"/><path d="M2.6 8.4 L8.2 2.8 M4 2.6 H8.4 V7" stroke="#d0d2d4" stroke-width="1.7" fill="none"/></g><rect x="1616" y="31.6" width="10.4" height="10.2" fill="#c2614f"/><rect x="1637.7" y="26.5" width="1" height="19.5" fill="#555759"/><g transform="translate(1681.6 36.4)"><path d="M5.2 -5.2 L-2.6 2.6" stroke="#5a94d6" stroke-width="1.9" fill="none"/><path d="M1.6 5.2 H-5.2 V-1.6 Z" fill="#5a94d6"/></g><g transform="translate(1707.6 36.4)"><path d="M-6 0.4 L-2 4.6 L6 -4.8" stroke="#64aa5a" stroke-width="2" fill="none"/></g><g transform="translate(1733.4 36.4)"><path d="M-5.2 5.2 L2.6 -2.6" stroke="#64aa5a" stroke-width="1.9" fill="none"/><path d="M-1.6 -5.2 H5.2 V1.6 Z" fill="#64aa5a"/></g><g transform="translate(1759.7 36.4)"><circle r="6.3" fill="none" stroke="#afb1b3" stroke-width="1.5"/><path d="M0 -3.6 V0.4 L2.6 2.2" stroke="#afb1b3" stroke-width="1.5" fill="none"/></g><g transform="translate(1786.2 36.4)"><path d="M-4.6 -2.8 H2 A4 4 0 0 1 2 5.4 H-3" stroke="#afb1b3" stroke-width="1.6" fill="none"/><path d="M-7.2 -2.8 L-2.6 -6.6 V1 Z" fill="#afb1b3"/></g><rect x="1801.5" y="26.5" width="1" height="19.5" fill="#555759"/><g transform="translate(1811 29.5)"><path d="M0 1 h6 l2 1.8 h6.4 v10 h-14.4 z" fill="#afb1b3"/><rect x="6.6" y="5.6" width="8.6" height="8.6" fill="#3c3f41"/><rect x="11.4" y="6.2" width="3.2" height="3.2" fill="#4f8fd8"/><rect x="7.4" y="10.4" width="3.2" height="3.2" fill="#4f8fd8"/><rect x="11.4" y="10.4" width="3.2" height="3.2" fill="#4f8fd8"/></g><g transform="translate(1843.4 35.4)"><circle r="4.8" fill="none" stroke="#afb1b3" stroke-width="1.8"/><path d="M3.4 3.6 L8 8.4" stroke="#afb1b3" stroke-width="2"/></g><g transform="translate(1870.4 36.4)"><path d="M-1.63 -4.62 L-1.39 -6.86 L1.39 -6.86 L1.63 -4.62 L3.18 -3.72 L5.25 -4.63 L6.64 -2.23 L4.82 -0.89 L4.82 0.89 L6.64 2.23 L5.25 4.63 L3.18 3.72 L1.63 4.62 L1.39 6.86 L-1.39 6.86 L-1.63 4.62 L-3.18 3.72 L-5.25 4.63 L-6.64 2.23 L-4.82 0.89 L-4.82 -0.89 L-6.64 -2.23 L-5.25 -4.63 L-3.18 -3.72 Z M2.3 0 A2.3 2.3 0 1 0 -2.3 0 A2.3 2.3 0 1 0 2.3 0 Z" fill="#afb1b3" fill-rule="evenodd" stroke="#afb1b3" stroke-width="0.8" stroke-linejoin="round"/></g><g transform="translate(1896.3 36.6)"><circle r="7.6" fill="#c3c5c7"/><circle cy="-1.8" r="2.9" fill="#3c3f41"/><ellipse cx="0" cy="7.4" rx="5" ry="4.4" fill="#3c3f41"/></g><g transform="translate(1824.6 90.8)"><path d="M-4.6 0.4 L-1.6 3.4 L4.8 -4" stroke="#62b543" stroke-width="1.8" fill="none"/><path d="M-5.4 5.4 l1.8 -1.4 l1.8 1.4 l1.8 -1.4 l1.8 1.4 l1.8 -1.4 l1.8 1.4" stroke="#62b543" stroke-width="0.9" fill="none"/></g><g transform="translate(1855.4 91)"><path d="M-3.8 2 L0 -2 L3.8 2" fill="none" stroke="#b9bbbd" stroke-width="1.5"/></g><g transform="translate(1876.4 91.4)"><path d="M-3.8 -2 L0 2 L3.8 -2" fill="none" stroke="#b9bbbd" stroke-width="1.5"/></g><rect x="1870.6" y="105" width="1.4" height="3.4" fill="#4b63b5"/><g transform="translate(471.1 113.2)"><circle r="4.9" fill="#e5a73d"/><path d="M-2.6 5.4 H2.6 M-2.6 6.8 H2.6 M-1.6 8.2 H1.6" stroke="#8f9193" stroke-width="0.9"/></g><rect x="80.45" y="756.25" width="629.9" height="24.9" rx="4.4" fill="none" stroke="#d75f28" stroke-width="3.3"/><path d="M714 97.6 q1.5 -2.2 3 0 t3 0 t3 0 t3 0 t3 0 t3 0 t3 0 t3 0 t3 0 t3 0 t3 0 t3 0 t3 0 t3 0 t3 0 t3 0 t3 0 t3 0 t3 0 t3 0 t3 0 t3 0 t3 0 t3 0 t3 0 t3 0 t3 0 t3 0 t3 0 t3 0 t3 0 t3 0 t3 0 t3 0" stroke="#74956f" stroke-width="0.85" fill="none"/><rect x="75.6" y="475.6" width="21.6" height="21.6" rx="3" fill="#5a5d5f"/><rect x="101.6" y="475.6" width="21.6" height="21.6" rx="3" fill="#5a5d5f"/><rect x="134.4" y="475.6" width="21.6" height="21.6" rx="3" fill="#5a5d5f"/><g transform="translate(27 486)"><path d="M-3 -6.2 V2" stroke="#afb1b3" stroke-width="2" fill="none"/><path d="M-6.8 1.2 H0.8 L-3 6 Z" fill="#afb1b3"/><text x="1.6" y="-0.6" font-size="9.5" font-weight="700" fill="#afb1b3" font-family="Liberation Sans, sans-serif">a</text><text x="1.8" y="6.8" font-size="9.5" font-weight="700" fill="#afb1b3" font-family="Liberation Sans, sans-serif">z</text></g><rect x="43.3" y="477" width="1" height="18.600000000000023" fill="#515456"/><g transform="translate(59.6 487)"><circle r="6.9" fill="#6a9a4b"/><text x="-0.4" y="3.4" font-size="9" font-weight="700" text-anchor="middle" fill="#2f4a24" font-family="Liberation Serif, serif">I</text><rect x="2.4" y="-9" width="8.4" height="8.6" fill="#3c3f41"/><path d="M6.6 -1.4 V-5.4" stroke="#d4d6d8" stroke-width="1.9" fill="none"/><path d="M3.4 -4.8 H9.8 L6.6 -8.8 Z" fill="#d4d6d8"/></g><g transform="translate(86.3 486.4)"><circle r="7" fill="#d4a94e"/><text x="0" y="3.6" font-size="10" font-weight="700" text-anchor="middle" fill="#6b4d17" font-family="Liberation Sans, sans-serif">f</text></g><g transform="translate(112.4 486.4)"><path d="M-4.4 -4.6 L0 0.2 L4.4 -4.6 M0 0 V2" stroke="#c9cbcd" stroke-width="1.5" fill="none"/><rect x="-6.2" y="-6.6" width="3.2" height="3.2" fill="#d4d6d8"/><rect x="3" y="-6.6" width="3.2" height="3.2" fill="#d4d6d8"/><path d="M-2.6 2.8 L0 0.8 L2.6 2.8 V6.4 H-2.6 Z" fill="#d4d6d8"/></g><rect x="128.5" y="477" width="1" height="18.600000000000023" fill="#515456"/><g transform="translate(145.2 486.4)"><path d="M-5.8 -2.4 V-4.6 Q-5.8 -5.8 -4.6 -5.8 H4.6 Q5.8 -5.8 5.8 -4.6 V-2.4" stroke="#d0d2d4" stroke-width="1.5" fill="none"/><path d="M0 6.4 V0" stroke="#d0d2d4" stroke-width="2" fill="none"/><path d="M-4 1.4 H4 L0 -3.4 Z" fill="#d0d2d4"/></g><g transform="translate(171.4 486.4)"><path d="M-5.8 -2.4 V-4.6 Q-5.8 -5.8 -4.6 -5.8 H4.6 Q5.8 -5.8 5.8 -4.6 V-2.4" stroke="#afb1b3" stroke-width="1.5" fill="none"/><path d="M0 -3.6 V2.4" stroke="#afb1b3" stroke-width="2" fill="none"/><path d="M-4 1.6 H4 L0 6.4 Z" fill="#afb1b3"/></g><clipPath id="cs"><rect x="12" y="501" width="374" height="28"/></clipPath><g clip-path="url(#cs)"><g transform="translate(44.2 511.8)"><circle r="7" fill="#c8973f"/><text x="0" y="3.3" font-size="9" font-weight="700" text-anchor="middle" fill="#5a3f12" font-family="Liberation Sans, sans-serif">V</text></g><g transform="translate(44.2 531.8)"><circle r="7" fill="#c8973f"/><text x="0" y="3.3" font-size="9" font-weight="700" text-anchor="middle" fill="#5a3f12" font-family="Liberation Sans, sans-serif">V</text></g></g><g transform="translate(65.2 535.8)"><path d="M7.2 0 L10.6 6 H3.8 Z" fill="#d4d6d8"/><circle cx="3" cy="12" r="2.8" fill="#b9bbbd"/><rect x="7.6" y="8.6" width="6.8" height="6.2" fill="#f0bf3a"/><circle cx="13.6" cy="14" r="2" fill="#57c05f"/></g><g transform="translate(26.2 572.4)"><path d="M0.4 5 A4.7 4.7 0 1 1 1 -4.3" fill="none" stroke="#64aa5a" stroke-width="2.1"/><path d="M2.4 -8 L7.6 -4.4 L2.4 -0.8 Z" fill="#64aa5a"/><rect x="-0.2" y="0.2" width="7.8" height="7" fill="#3c3f41"/><rect x="0.8" y="1.2" width="5.8" height="5" fill="#c8cacc"/></g><g transform="translate(26.4 597.6)"><path d="M-6.2 6.4 L0.6 -0.4" stroke="#afb1b3" stroke-width="2.6" stroke-linecap="round"/><path d="M5.8 -5.4 L3 -2.6 L1.2 -4.4 L4 -7.2 A4.4 4.4 0 1 0 6.6 -1.6 A4.4 4.4 0 0 0 5.8 -5.4 Z" fill="#afb1b3"/></g><rect x="17" y="613.5" width="19" height="1" fill="#515456"/><rect x="17" y="646.5" width="19" height="1" fill="#515456"/><rect x="17" y="679.5" width="19" height="1" fill="#515456"/><rect x="21.2" y="625.4" width="10.4" height="10.4" fill="#c2614f"/><g transform="translate(26.4 663.2)"><rect x="-6.2" y="-5.6" width="5.6" height="4.8" fill="#afb1b3"/><rect x="0.6" y="-5.6" width="5.6" height="4.8" fill="#afb1b3"/><rect x="-6.2" y="0.6" width="12.4" height="4.8" fill="#afb1b3"/></g><g transform="translate(26.4 696.6)"><path d="M-6.8 7 L-1.6 1.8" stroke="#afb1b3" stroke-width="1.5"/><path d="M-4.4 -1.2 L1.4 4.6 L2.6 1.6 L6.6 -2.4 L2.4 -6.6 L-1.6 -2.6 Z" fill="#afb1b3"/></g><g transform="translate(55.2 572.4)"><path d="M0 6.4 V-5.6 M-4.4 -1.6 L0 -6 L4.4 -1.6" stroke="#606365" stroke-width="1.5" fill="none"/></g><g transform="translate(55.2 598.6)"><path d="M0 -6.4 V5.6 M-4.4 1.6 L0 6 L4.4 1.6" stroke="#606365" stroke-width="1.5" fill="none"/></g><g transform="translate(55.4 624.6)"><path d="M-6.2 -5.2 H6.2 M-6.2 -0.4 H3.6 A2.7 2.7 0 0 1 3.6 5 H0.4 M-6.2 5 H-3.4" stroke="#afb1b3" stroke-width="1.5" fill="none"/><path d="M-2.6 5 L1.4 2 V8 Z" fill="#afb1b3"/></g><rect x="44.4" y="639.4" width="21.6" height="21.6" rx="3" fill="#5a5d5f"/><g transform="translate(55.2 650.2)"><path d="M-6.2 -4.4 H-1 M-6.2 -0.4 H-1 M-6.2 5.4 H6.2" stroke="#c9cbcd" stroke-width="1.5" fill="none"/><path d="M3 -6.4 V1.6 M0 -1.4 L3 2.2 L6 -1.4" stroke="#c9cbcd" stroke-width="1.6" fill="none"/></g><g transform="translate(55.2 677)"><rect x="-4" y="-6.6" width="8" height="3.4" fill="#afb1b3"/><path d="M-6.8 -2.4 H6.8 V3.6 H4.4 V0.8 H-4.4 V3.6 H-6.8 Z" fill="#afb1b3"/><rect x="-3.4" y="2" width="6.8" height="4.4" fill="none" stroke="#afb1b3" stroke-width="1.3"/></g><g transform="translate(55.2 702)"><rect x="-4.6" y="-6" width="9.2" height="1.7" fill="#afb1b3"/><rect x="-2" y="-7.4" width="4" height="1.6" fill="#afb1b3"/><path d="M-4 -3.2 H4 V6.4 H-4 Z" fill="#afb1b3"/></g><g transform="translate(28.6 941)"><path d="M-2.6 -4 V5.4 M-2.6 3.2 C-2.6 0 2.8 1.4 2.8 -2.4" stroke="#afb1b3" stroke-width="1.5" fill="none"/><circle cx="-2.6" cy="-4.4" r="1.7" fill="#afb1b3"/><circle cx="2.8" cy="-3" r="1.7" fill="#afb1b3"/><circle cx="-2.6" cy="4.6" r="1.5" fill="#afb1b3"/></g><path d="M73 934.6 L82 940.4 L73 946.2 Z" fill="#c9cbcd"/><circle cx="82.4" cy="945.4" r="2" fill="#57c05f"/><g transform="translate(132.8 940.8)"><g transform="scale(0.82)"><ellipse cx="0" cy="1.2" rx="4.3" ry="5" fill="#afb1b3"/><path d="M-3 -3.8 A3 3 0 0 1 3 -3.8 Z" fill="#afb1b3"/><path d="M-3.6 -1.4 L-6.4 -3 M-4 1.4 H-6.8 M-3.6 4 L-6.2 5.8 M3.6 -1.4 L6.4 -3 M4 1.4 H6.8 M3.6 4 L6.2 5.8 M-1.8 -5.4 L-3.2 -7.2 M1.8 -5.4 L3.2 -7.2" stroke="#afb1b3" stroke-width="1.6" fill="none"/><path d="M-2.6 0 H2.6 M-2.6 2.8 H2.6" stroke="#3c3f41" stroke-width="1.1"/></g></g><g transform="translate(202.4 934)"><path d="M0.7 0 V12.4 H12.6" stroke="#afb1b3" stroke-width="1.3" fill="none"/><path d="M2.6 8.8 L5.6 4.6 L8 6.8 L11.6 2" stroke="#afb1b3" stroke-width="1.2" fill="none"/></g><g transform="translate(343.4 940.6)"><path d="M-6.6 -2.6 L6.6 -6.2 L2 6.8 L0 1.2 Z" fill="#afb1b3"/><path d="M-3.4 0.4 L0.4 1.6 L-2.8 5 Z" fill="#afb1b3"/><path d="M0 1.2 L6.6 -6.2" stroke="#3c3f41" stroke-width="1"/></g><g transform="translate(415.6 940.6)"><path d="M-1.6 -1.2 L5.4 6.2" stroke="#afb1b3" stroke-width="2.4" stroke-linecap="round"/><path d="M-6 -1.4 L-1.6 -6.2 L2.4 -2.8 L0.4 -0.6 L-1 -2 L-4 1 Z" fill="#afb1b3"/></g><g transform="translate(477.2 940.6)"><path d="M-5.2 -4 H-3.2 M-1.6 -4 H5.4 M-5.2 0 H-3.2 M-1.6 0 H5.4 M-5.2 4 H-3.2 M-1.6 4 H5.4" stroke="#afb1b3" stroke-width="1.7" fill="none"/></g><g transform="translate(542.6 940.6)"><rect x="-5.8" y="-5" width="11.6" height="10.8" rx="1" fill="none" stroke="#afb1b3" stroke-width="1.5"/><path d="M-3.4 -7 V-4.4 M3.4 -7 V-4.4" stroke="#afb1b3" stroke-width="1.6"/><path d="M-5.6 -1.8 H5.6" stroke="#afb1b3" stroke-width="1.4"/><path d="M-3.4 1 H2 M-3.4 3.4 H3.6" stroke="#afb1b3" stroke-width="1.2"/></g><g transform="translate(597 940.4)"><circle r="5.6" fill="#c8624e"/><rect x="-0.9" y="-3.4" width="1.8" height="4.2" fill="#3c3f41"/><rect x="-0.9" y="1.8" width="1.8" height="1.8" fill="#3c3f41"/></g><g transform="translate(680.8 940.4)"><rect x="-5.8" y="-5.2" width="11.6" height="10.4" fill="#afb1b3"/><path d="M-3.6 -3 L-0.6 0 L-3.6 3 M0.4 3 H3.6" stroke="#3c3f41" stroke-width="1.3" fill="none"/></g><g transform="translate(759.8 940.4)"><path d="M-3.2 -5.8 H3.2 L6.4 0 L3.2 5.8 H-3.2 L-6.4 0 Z" fill="#afb1b3"/><path d="M-1.8 -3 L2.8 0 L-1.8 3 Z" fill="#3c3f41"/></g><g transform="translate(840 939.6)"><circle r="5" fill="none" stroke="#afb1b3" stroke-width="1.6"/><path d="M3.6 3.8 L7.4 7.6" stroke="#afb1b3" stroke-width="1.8"/><path d="M-1 -2 L-3 0 L-1 2 M1 -2 L3 0 L1 2" stroke="#afb1b3" stroke-width="1.1" fill="none"/></g><g transform="translate(938.2 940.4)"><rect x="-6.2" y="-5.6" width="12.4" height="3" fill="#afb1b3"/><rect x="-6.2" y="-1.2" width="3.6" height="7" fill="#afb1b3"/><rect x="-1.2" y="-1.2" width="7.4" height="2.6" fill="#afb1b3"/><rect x="-1.2" y="2.8" width="7.4" height="3" fill="#afb1b3"/></g><rect x="3.4" y="958.6" width="9.8" height="9.8" rx="1.2" fill="none" stroke="#858789" stroke-width="1.2"/><rect x="5.9" y="956.6" width="9.9" height="10" rx="1.2" fill="#3c3f41" stroke="#8b8d8f" stroke-width="1.3"/><g transform="translate(1504.4 962.4)"><path d="M-1 -6 L-5.6 -3.2 V3.2 L-1 6 Z" fill="#e8eaec"/><path d="M1 -6 L5.6 -3.2 V-1 H2.6 V1 H5.6 V3.2 L1 6 Z" fill="#e8eaec"/></g><circle cx="1528.4" cy="962.6" r="6" fill="#5c9a42"/><circle cx="1552.6" cy="962.6" r="6" fill="#5c9a42"/><g transform="translate(1841.6 962.6)"><path d="M-2.6 -4 V6 M-2.6 2.4 C-2.6 0 2.8 1 2.8 -2" stroke="#afb1b3" stroke-width="1.5" fill="none"/><circle cx="-2.6" cy="-4.6" r="1.7" fill="#afb1b3"/><circle cx="2.8" cy="-3" r="1.7" fill="#afb1b3"/></g><g transform="translate(1892.4 962.4)"><rect x="-2.6" y="-0.6" width="8.6" height="6.4" fill="#d6d8da"/><path d="M-5 0 V-3 A2.6 2.6 0 0 1 0.2 -3 V-1" stroke="#d6d8da" stroke-width="1.4" fill="none"/></g><path d="M0 99.6 h3.4 l1.4 1.6 h2.8 v7 h-7.6 z" fill="#dcdee0"/><circle cx="2.6" cy="178.2" r="3" fill="none" stroke="#9a9c9e" stroke-width="1.5"/><path d="M2.6 181.2 V185" stroke="#9a9c9e" stroke-width="1.5"/><path d="M0 822.6 h6.6 v10 l-6.6 -3.4 z" fill="#9a9c9e"/><rect x="3.8" y="906.4" width="3" height="3" fill="#dcdee0"/><rect x="0" y="910.8" width="2.6" height="3.4" fill="#dcdee0"/><rect x="3.8" y="910.8" width="3" height="3.4" fill="#dcdee0"/><defs><linearGradient id="cg" x1="0" x2="1" y1="0" y2="0"><stop offset="0" stop-color="#7fd6ff"/><stop offset="0.45" stop-color="#2f49e2"/><stop offset="0.6" stop-color="#3a6cf0"/><stop offset="1" stop-color="#56b8ff"/></linearGradient></defs><g transform="translate(1899.5 70.4)"><path d="M0 -6.4 L5.7 -3.2 V3.2 L0 6.4 L-5.7 3.2 V-3.2 Z" fill="url(#cg)"/><path d="M-1.4 -3.4 A3.6 3.6 0 0 0 -1.4 3.4 Z" fill="#3c3f41"/><path d="M2 -0.4 H5.8 V1.6 H2 Z" fill="#3c3f41" opacity="0.55"/></g><g transform="translate(1899.4 167.6)"><circle r="5.8" fill="none" stroke="#afb1b3" stroke-width="1.3"/><circle cx="-1.8" cy="-1.8" r="1.1" fill="#afb1b3"/><circle cx="1.8" cy="-1.8" r="1.1" fill="#afb1b3"/><circle cx="-1.8" cy="1.8" r="1.1" fill="#afb1b3"/><circle cx="1.8" cy="1.8" r="1.1" fill="#afb1b3"/><path d="M-6.8 0 H-5 M5 0 H6.8" stroke="#afb1b3" stroke-width="1.3"/></g><g transform="translate(1899.4 270.2)"><path d="M-4.6 3.2 C-3.2 1.6 -3.8 -4.6 0 -4.6 C3.8 -4.6 3.2 1.6 4.6 3.2 Z" fill="#afb1b3"/><rect x="-1.4" y="4" width="2.8" height="1.6" fill="#afb1b3"/><circle cy="-5.2" r="1" fill="#afb1b3"/></g><g transform="translate(1899.4 369.2)"><path d="M-6 0 C-3.6 -4.4 3.6 -4.4 6 0 C3.6 4.4 -3.6 4.4 -6 0 Z" fill="none" stroke="#afb1b3" stroke-width="1.3"/><circle r="1.9" fill="#afb1b3"/></g><g transform="translate(1899.4 805.4)"><rect x="-3.6" y="-5" width="7.2" height="10" rx="1" fill="none" stroke="#afb1b3" stroke-width="1.4"/></g></svg>
</div></body></html>
